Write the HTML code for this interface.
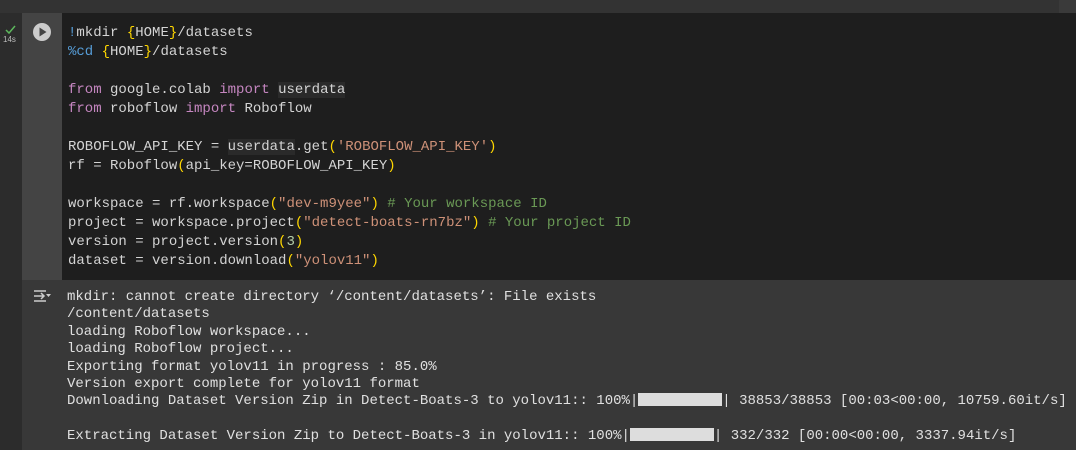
<!DOCTYPE html>
<html><head><meta charset="utf-8"><style>
body{margin:0;width:1076px;height:450px;overflow:hidden;background:#1e1e1e;font-family:"Liberation Mono","DejaVu Sans Mono",monospace;font-size:14px;position:relative}
.top{position:absolute;left:0;top:0;width:1076px;height:13px;background:#333}
.tb{position:absolute;left:1059px;top:-6px;width:30px;height:30px;border-radius:7px;background:#3a3a3a}
.left{position:absolute;left:0;top:13px;width:22px;height:437px;background:#2c2c2c}
.gut{position:absolute;left:22px;top:13px;width:40px;height:267px;background:#444}
.code{position:absolute;left:62px;top:13px;width:1014px;height:267px;background:#1e1e1e}
pre{margin:0;font-family:inherit;font-size:14px;white-space:pre}
.c{position:absolute;left:68px;top:24px;line-height:19px;color:#d4d4d4}
.out{position:absolute;left:22px;top:280px;width:1054px;height:170px;background:#383838}
.o{position:absolute;left:67px;top:289px;line-height:17.4px;color:#e0e0e0}
.k{color:#c586c0}.m{color:#569cd6}.b{color:#ffd700}.s{color:#ce9178}.cm{color:#6a9955}.n{color:#b5cea8}
.hl{background:#2a2a2a}
.bar{display:inline-block;width:84px;height:13px;background:#ddd;vertical-align:-2px}
</style></head><body>
<div class="top"></div><div class="tb"></div>
<div class="left"></div>
<div class="gut"></div>
<svg style="position:absolute;left:4px;top:25px" width="14" height="10"><path d="M2 5l3 3 6-7" stroke="#5cb85c" stroke-width="1.5" fill="none"/></svg>
<div style="position:absolute;left:3px;top:35px;font-family:'Liberation Sans',sans-serif;font-size:8px;color:#bbb">14s</div>
<svg style="position:absolute;left:32px;top:22px" width="20" height="20"><circle cx="10" cy="10" r="9" fill="#ccc"/><path d="M7.5 5.5v9l7-4.5z" fill="#444"/></svg>
<div class="code"></div>
<pre class="c"><span class="m">!</span>mkdir <span class="b">{</span>HOME<span class="b">}</span>/datasets
<span class="m">%cd</span> <span class="b">{</span>HOME<span class="b">}</span>/datasets

<span class="k">from</span> google.colab <span class="k">import</span> <span class="hl">userdata</span>
<span class="k">from</span> roboflow <span class="k">import</span> Roboflow

ROBOFLOW_API_KEY = <span class="hl">userdata</span>.get<span class="b">(</span><span class="s">'ROBOFLOW_API_KEY'</span><span class="b">)</span>
rf = Roboflow<span class="b">(</span>api_key=ROBOFLOW_API_KEY<span class="b">)</span>

workspace = rf.workspace<span class="b">(</span><span class="s">"dev-m9yee"</span><span class="b">)</span> <span class="cm"># Your workspace ID</span>
project = workspace.project<span class="b">(</span><span class="s">"detect-boats-rn7bz"</span><span class="b">)</span> <span class="cm"># Your project ID</span>
version = project.version<span class="b">(</span><span class="n">3</span><span class="b">)</span>
dataset = version.download<span class="b">(</span><span class="s">"yolov11"</span><span class="b">)</span></pre>
<div class="out"></div>
<svg style="position:absolute;left:32px;top:288px" width="20" height="16"><path d="M2 3h12M2 13h12M2 8h10M9 5l3 3-3 3" stroke="#ccc" stroke-width="1.5" fill="none"/><path d="M14 6h5l-2.5 3z" fill="#ccc"/></svg>
<pre class="o">mkdir: cannot create directory ‘/content/datasets’: File exists
/content/datasets
loading Roboflow workspace...
loading Roboflow project...
Exporting format yolov11 in progress : 85.0%
Version export complete for yolov11 format
Downloading Dataset Version Zip in Detect-Boats-3 to yolov11:: 100%|<span class="bar"></span>| 38853/38853 [00:03&lt;00:00, 10759.60it/s]

Extracting Dataset Version Zip to Detect-Boats-3 in yolov11:: 100%|<span class="bar"></span>| 332/332 [00:00&lt;00:00, 3337.94it/s]</pre>
</body></html>
